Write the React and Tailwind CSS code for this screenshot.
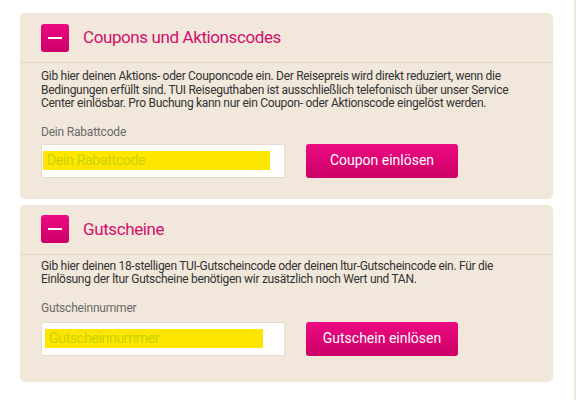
import React from 'react';

const font = { fontFamily: 'Roboto, "Noto Sans", sans-serif' };

const MinusIcon = () => (
  <div className="w-7 h-7 rounded-[3px] bg-gradient-to-b from-[#ec0a84] to-[#cc0066] flex items-center justify-center shrink-0">
    <div className="w-[14px] h-[2px] bg-white" />
  </div>
);

const Section = ({ title, lines, label, placeholder, markWidth, markLeft, button, bodyTop, inputGap, bottom }) => (
  <div className="w-[533px] rounded-[5px] bg-[#f1e7da]">
    {/* Header */}
    <div className="h-[50px] px-[21px] flex items-center border-b border-[#e0d4c3]">
      <MinusIcon />
      <h2 className="ml-[14px] text-[17px] leading-none text-[#d40e6e] tracking-[-0.4px]">{title}</h2>
    </div>

    {/* Body */}
    <div className={`px-[21px] ${bodyTop} ${bottom}`}>
      <p className="text-[12px] leading-[13.5px] text-[#333333] whitespace-nowrap tracking-[-0.3px]">
        {lines.map((l, i) => (
          <span key={i} className="block">{l}</span>
        ))}
      </p>
      <div className="mt-[14px] text-[12px] leading-[14px] text-[#6b6b6b] tracking-[-0.2px]">{label}</div>
      <div className={`${inputGap} flex items-center`}>
        <div className="w-[244px] h-[34px] bg-white border border-[#e6dccd] rounded-[2px] flex items-center">
          <span
            className={`${markLeft} ${markWidth} h-[19px] bg-[#ffe600] text-[14px] leading-[19px] text-[#c9d300] pl-[4px] tracking-[-0.3px]`}
          >
            {placeholder}
          </span>
        </div>
        <button className="ml-[21px] w-[152px] h-[34px] rounded-[3px] bg-gradient-to-b from-[#ec0a82] to-[#cc0066] text-white text-[14px]">
          {button}
        </button>
      </div>
    </div>
  </div>
);

export default function App() {
  return (
    <div className="w-[576px] h-[400px] bg-white flex overflow-hidden" style={font}>
      <div className="pl-5 pt-[13px] flex flex-col gap-[6px]">
        <Section
          title="Coupons und Aktionscodes"
          lines={[
            'Gib hier deinen Aktions- oder Couponcode ein. Der Reisepreis wird direkt reduziert, wenn die',
            'Bedingungen erfüllt sind. TUI Reiseguthaben ist ausschließlich telefonisch über unser Service',
            'Center einlösbar. Pro Buchung kann nur ein Coupon- oder Aktionscode eingelöst werden.',
          ]}
          label="Dein Rabattcode"
          placeholder="Dein Rabattcode"
          markLeft="ml-[1px]"
          markWidth="w-[227px]"
          button="Coupon einlösen"
          bodyTop="pt-[7px]"
          inputGap="mt-[5px]"
          bottom="pb-[21px]"
        />
        <Section
          title="Gutscheine"
          lines={[
            'Gib hier deinen 18-stelligen TUI-Gutscheincode oder deinen ltur-Gutscheincode ein. Für die',
            'Einlösung der ltur Gutscheine benötigen wir zusätzlich noch Wert und TAN.',
          ]}
          label="Gutscheinnummer"
          placeholder="Gutscheinnummer"
          markLeft="ml-[3px]"
          markWidth="w-[218px]"
          button="Gutschein einlösen"
          bodyTop="pt-[5px]"
          inputGap="mt-[7px]"
          bottom="pb-[26px]"
        />
      </div>
      <div className="ml-auto w-[2px] h-full bg-[#f1e7da]" />
    </div>
  );
}
